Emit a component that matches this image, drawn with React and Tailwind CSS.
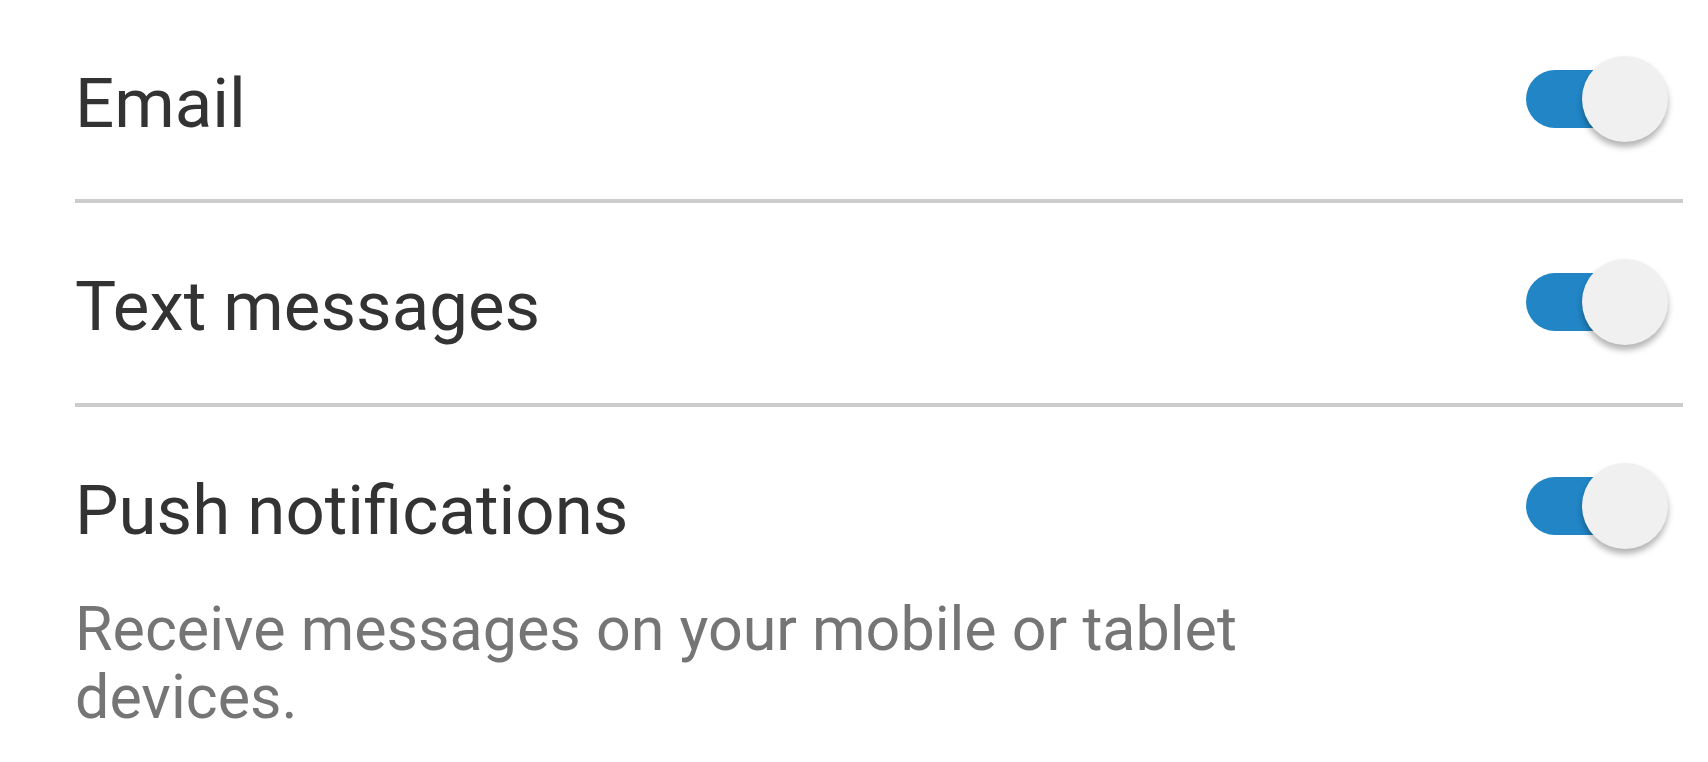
import React from 'react'

function Toggle() {
  return (
    <div className="relative w-[142px] h-[86px] shrink-0 mr-[15px]">
      <div className="absolute left-0 top-[14px] w-[130px] h-[58px] rounded-full bg-[#2185c6]" />
      <div className="absolute right-0 top-0 w-[86px] h-[86px] rounded-full bg-[#f0f0f0] shadow-[0_5px_6px_rgba(0,0,0,0.3)]" />
    </div>
  )
}

function Row({ label, height = 'h-[200px]' }) {
  return (
    <div className={`flex justify-between items-start ${height}`}>
      <span className="mt-[62px] text-[69px] leading-[84px] text-[#333333]">{label}</span>
      <div className="mt-[56px]">
        <Toggle />
      </div>
    </div>
  )
}

export default function App() {
  return (
    <div className="w-[1708px] h-[762px] bg-white overflow-hidden pl-[75px] pr-[25px]" style={{ fontFamily: 'Roboto, "Noto Sans", sans-serif' }}>
      <Row label="Email" height="h-[199px]" />
      <div className="h-[4px] bg-[#cccccc]" />
      <Row label="Text messages" />
      <div className="h-[4px] bg-[#cccccc]" />
      <div>
        <Row label="Push notifications" height="h-[188px]" />
        <p className="max-w-[1230px] text-[61px] leading-[68px] text-[#757575]">
          Receive messages on your mobile or tablet devices.
        </p>
      </div>
    </div>
  )
}
